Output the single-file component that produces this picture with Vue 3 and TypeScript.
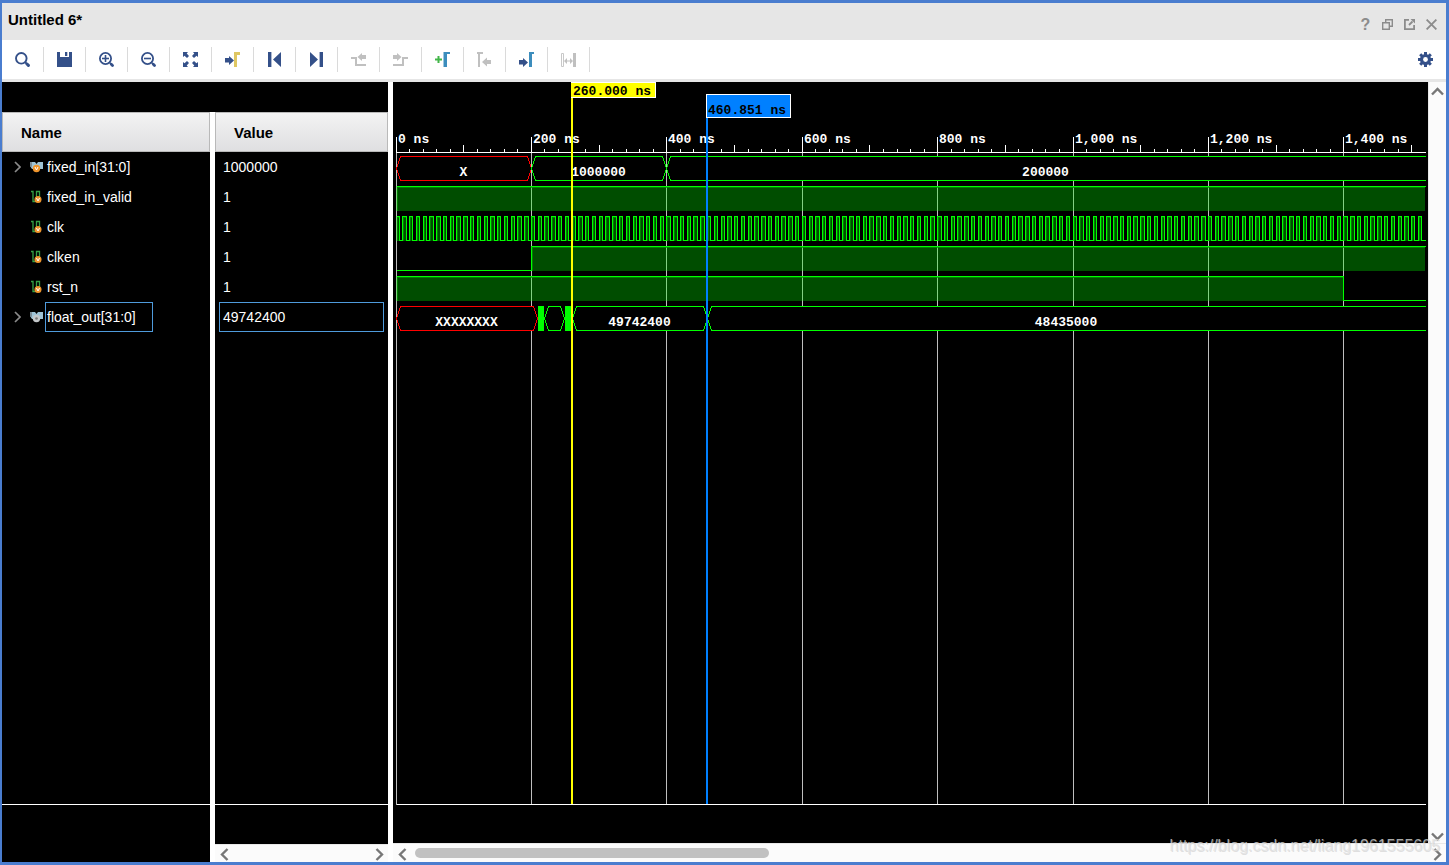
<script setup lang="ts">
import { computed, onBeforeUnmount, onMounted, ref } from 'vue'

type Kind = 'bus' | 'level'
interface Segment { from: number; to: number; label?: string; color?: string; dense?: boolean }
interface Signal {
  name: string
  value: string
  kind: Kind
  direction: 'in' | 'out'
  selected?: boolean
  segments?: Segment[]
  edges?: [number, number][]
}

const END = 100000
const RED = '#ff0000'
const GREEN = '#00ff00'

const clockEdges: [number, number][] = []
for (let t = 0; t < 4000; t += 10) clockEdges.push([t, 1], [t + 5, 0])

const signals: Signal[] = [
  {
    name: 'fixed_in[31:0]', value: '1000000', kind: 'bus', direction: 'in',
    segments: [
      { from: 0, to: 200, label: 'X', color: RED },
      { from: 200, to: 400, label: '1000000' },
      { from: 400, to: END, label: '200000' },
    ],
  },
  { name: 'fixed_in_valid', value: '1', kind: 'level', direction: 'in', edges: [[0, 1]] },
  { name: 'clk', value: '1', kind: 'level', direction: 'in', edges: clockEdges },
  { name: 'clken', value: '1', kind: 'level', direction: 'in', edges: [[0, 0], [200, 1]] },
  { name: 'rst_n', value: '1', kind: 'level', direction: 'in', edges: [[0, 1], [1400, 0]] },
  {
    name: 'float_out[31:0]', value: '49742400', kind: 'bus', direction: 'out', selected: true,
    segments: [
      { from: 0, to: 209, label: 'XXXXXXXX', color: RED },
      { from: 209, to: 219, dense: true },
      { from: 219, to: 249 },
      { from: 249, to: 260, dense: true },
      { from: 260, to: 460, label: '49742400' },
      { from: 460, to: END, label: '48435000' },
    ],
  },
]

const tools = [
  { id: 'search', label: 'Search' },
  { id: 'save', label: 'Save' },
  { id: 'zoomin', label: 'Zoom in' },
  { id: 'zoomout', label: 'Zoom out' },
  { id: 'fit', label: 'Zoom fit' },
  { id: 'cursor', label: 'Go to cursor' },
  { id: 'first', label: 'Go to start' },
  { id: 'last', label: 'Go to end' },
  { id: 'prevedge', label: 'Previous transition' },
  { id: 'nextedge', label: 'Next transition' },
  { id: 'addmark', label: 'Add marker' },
  { id: 'prevmark', label: 'Previous marker' },
  { id: 'nextmark', label: 'Next marker' },
  { id: 'measure', label: 'Swap cursors' },
]

const pane = ref<HTMLElement | null>(null)
const width = ref(1035)
const height = ref(761)
let observer: ResizeObserver | undefined
const measure = () => {
  if (!pane.value) return
  width.value = pane.value.clientWidth
  height.value = pane.value.clientHeight
}
onMounted(() => {
  measure()
  observer = new ResizeObserver(measure)
  if (pane.value) observer.observe(pane.value)
})
onBeforeUnmount(() => observer?.disconnect())

const SCALE = 0.677
const ORIGIN = 2.55
const ROW = 30
const TOP = 70
const right = computed(() => width.value - 3)
const floor = computed(() => height.value - 39)
const px = (t: number) => Math.min(Math.round(ORIGIN + t * SCALE), right.value)

const ticks = computed(() => {
  const out: { t: number; x: number }[] = []
  for (let t = 0; ORIGIN + t * SCALE < right.value - 1; t += 20) out.push({ t, x: px(t) })
  return out
})
const majors = computed(() => ticks.value.filter((k) => k.t % 200 === 0))
const minorPath = computed(() =>
  ticks.value.filter((k) => k.t % 200).map((k) => `M${k.x} 70v${k.t % 100 ? -4 : -8}`).join(''))

const levels = computed(() =>
  signals.flatMap((s, i) => {
    if (s.kind !== 'level' || !s.edges) return []
    const hi = TOP + ROW * i + 4
    const lo = hi + 24
    let line = ''
    let fill = ''
    let glow = ''
    s.edges.forEach(([t, v], n) => {
      const a = px(t)
      if (a >= right.value) return
      const next = s.edges![n + 1]
      const b = next ? px(next[0]) : right.value
      const y = v ? hi : lo
      line += n ? `V${y}H${b}` : `M${a} ${y}H${b}`
      if (v && b > a) {
        fill += `M${a} ${hi}H${b}V${lo + 1}H${a}z`
        glow += `M${a + 1} ${lo}V${hi + 1}H${b - 1}`
      }
    })
    return [{ line, fill, glow, key: s.name }]
  }))

const buses = computed(() =>
  signals.flatMap((s, i) => {
    if (s.kind !== 'bus' || !s.segments) return []
    const hi = TOP + ROW * i + 4
    const lo = hi + 24
    const mid = hi + 12
    return s.segments.map((g, n) => {
      const a = px(g.from)
      const b = px(g.to)
      const open = g.to === END
      const outline = open
        ? `M${b} ${hi}H${a + 4}L${a} ${mid}L${a + 4} ${lo}H${b}`
        : `M${a + 4} ${hi}H${b - 4}L${b} ${mid}L${b - 4} ${lo}H${a + 4}L${a} ${mid}z`
      return { key: `${s.name}${n}`, a, b, hi, outline, dense: g.dense, label: g.label, color: g.color ?? GREEN }
    })
  }))
</script>

<template>
  <main class="window">
    <header class="titlebar">
      <h1>Untitled 6*</h1>
      <div class="controls">
        <button aria-label="Help" class="help">?</button>
        <button aria-label="Restore">
          <svg width="11" height="11" viewBox="0 0 11 11" fill="none" stroke="#8c8c8c" stroke-width="1.4"><path d="M3.700 3.500V.7h6.600v6.600H7.500M.7 3.700h6.600v6.600H.7z" /></svg>
        </button>
        <button aria-label="Float">
          <svg width="11" height="11" viewBox="0 0 11 11" fill="none" stroke="#8c8c8c" stroke-width="1.800"><path d="M5 .9H.9v9.200h9.200V6M5 6l3.500-3.500" /><path d="M6.500 0H11v4.500z" fill="#8c8c8c" stroke="none" /></svg>
        </button>
        <button aria-label="Close">
          <svg width="11" height="11" viewBox="0 0 11 11" fill="none" stroke="#8c8c8c" stroke-width="1.900"><path d="M.6.6l9.800 9.800M10.400.6L.6 10.400" /></svg>
        </button>
      </div>
    </header>

    <nav class="toolbar" aria-label="Waveform tools">
      <button v-for="tool in tools" :key="tool.id" class="tool" :aria-label="tool.label">
        <svg width="15" height="15" viewBox="0 0 15 15" fill="none">
          <g v-if="tool.id === 'search'" stroke="#345089"><circle cx="6.300" cy="6.300" r="5.300" stroke-width="1.900" /><path d="M10 10l2 2" stroke-width="1.800" /><path d="M12 12l1.400 1.400" stroke-width="3" stroke-linecap="round" /></g>
          <g v-else-if="tool.id === 'save'" fill="#345089"><path d="M0 0h3v5h9V0h3v15H0z" /><path d="M8 0h2v4H8z" /><path d="M10 0h1v4h-1z" opacity=".3" /></g>
          <g v-else-if="tool.id === 'zoomin' || tool.id === 'zoomout'" stroke="#345089"><circle cx="6.500" cy="6.500" r="5.600" stroke-width="1.800" /><path d="M3 6.500h7" stroke-width="1.600" /><path v-if="tool.id === 'zoomin'" d="M6.500 3v7" stroke-width="1.600" /><path d="M12.300 12.300l1.200 1.200" stroke-width="2.800" stroke-linecap="round" /><path d="M10 10l2 2" stroke-width="1.600" /></g>
          <g v-else-if="tool.id === 'fit'"><path fill="#345089" d="M0 0h5L3.700 1.500 6 4 4 6 1.500 3.700 0 5zM15 0v5l-1.500-1.300L11 6 9 4l2.300-2.500L10 0zM0 15v-5l1.500 1.300L4 9l2 2-2.300 2.500L5 15zM15 15h-5l1.300-1.500L9 11l2-2 2.500 2.300L15 10z" /></g>
          <g v-else-if="tool.id === 'cursor'"><path fill="#345089" d="M0 6h4V4l5 4.500L4 13v-2.500H0z" /><path fill="#dfc763" d="M9 0h6v3h-3v12H9z" /></g>
          <g v-else-if="tool.id === 'first'" fill="#345089"><path d="M1 0h3v15H1zM14 0v15L6 7.500z" /><path d="M4 0h1v15H4z" opacity=".4" /></g>
          <g v-else-if="tool.id === 'last'" fill="#345089"><path d="M11 0h3v15h-3zM1 0v15l8-7.500z" /><path d="M10 0h1v15h-1z" opacity=".4" /></g>
          <g v-else-if="tool.id === 'prevedge'"><path stroke="#c0c0c0" stroke-width="2" d="M0 6h5v7h10M5 6v8" /><path fill="#c0c0c0" d="M6.500 5L11 1v2h4v4h-4v2z" /></g>
          <g v-else-if="tool.id === 'nextedge'"><path stroke="#c0c0c0" stroke-width="2" d="M0 13h10V6h5M10 6v8" /><path fill="#c0c0c0" d="M8.500 5L4 1v2H0v4h4v2z" /></g>
          <g v-else-if="tool.id === 'addmark'"><path stroke="#43b649" stroke-width="2" d="M0 7.500h7M3.500 4v7" /><path fill="#3c8dbd" d="M8.500 0H15v2h-3v13H8.500z" /></g>
          <g v-else-if="tool.id === 'prevmark'" fill="#c0c0c0"><path d="M0 0h6v2H3v13H1V2H0z" /><path d="M5 10l5-4.500V8h4v4h-4v2.500z" /></g>
          <g v-else-if="tool.id === 'nextmark'"><path fill="#345089" d="M0 8h4V6l5 4.500L4 15v-2.500H0z" /><path fill="#3c8dbd" d="M10 0h5v2h-2v13h-3z" /></g>
          <g v-else><path stroke="#c8c8c8" d="M.5 1.500h2v13h-2z" /><path fill="#c0c0c0" d="M12 1h3v14h-3zM3 9l3-3v2.500h3V6l3 3-3 3V9.500H6V12z" /></g>
        </svg>
      </button>
      <button class="settings" aria-label="Settings">
        <svg width="15" height="15" viewBox="0 0 15 15">
          <g fill="#345089"><path v-for="a in [0, 45, 90, 135]" :key="a" d="M6 0h3v15H6z" :transform="`rotate(${a} 7.5 7.5)`" /><circle cx="7.500" cy="7.500" r="5.500" /></g>
          <circle cx="7.500" cy="7.500" r="2.400" fill="#fff" />
        </svg>
      </button>
    </nav>

    <div class="panes">
      <section class="pane names">
        <table>
          <thead><tr><th scope="col">Name</th></tr></thead>
          <tbody>
            <tr v-for="s in signals" :key="s.name">
              <td>
                <div class="name-cell">
                  <button v-if="s.kind === 'bus'" class="expander" :aria-label="`Expand ${s.name}`">
                    <svg width="7" height="12" viewBox="0 0 7 12" fill="none" stroke="#8a8a8a" stroke-width="1.700"><path d="M1 1l5 5-5 5" /></svg>
                  </button>
                  <span v-else class="expander"></span>
                  <svg v-if="s.kind === 'bus'" width="15" height="14" viewBox="0 0 15 14">
                    <path fill="#9ec3d6" d="M0 2h5l1.500 2L8 2h5v7H2L0 6z" /><path fill="#7d8d96" d="M0 2h2v5L0 6z" />
                    <circle cx="6.500" cy="8.500" r="3.700" :fill="s.direction === 'in' ? '#f0952c' : '#c4c8ca'" />
                    <path v-if="s.direction === 'in'" d="M5 7l1.500 3L8 7" stroke="#fff" fill="none" />
                    <circle v-else cx="6.500" cy="8.500" r="1.300" fill="#777" />
                  </svg>
                  <svg v-else width="15" height="14" viewBox="0 0 15 14">
                    <path d="M1 1.500h2v10h2M6.500 12V1.500h3V7" fill="none" stroke="#35a045" stroke-width="1.300" />
                    <circle cx="8" cy="9.500" r="3.500" fill="#f0952c" /><path d="M6.500 8L8 11l1.500-3" stroke="#fff" fill="none" />
                  </svg>
                  <span class="label" :class="{ selected: s.selected }">{{ s.name }}</span>
                </div>
              </td>
            </tr>
          </tbody>
        </table>
        <div class="baseline"></div>
      </section>

      <div class="divider short"></div>

      <section class="pane values">
        <table>
          <thead><tr><th scope="col">Value</th></tr></thead>
          <tbody>
            <tr v-for="s in signals" :key="s.name">
              <td><div class="value-cell" :class="{ selected: s.selected }">{{ s.value }}</div></td>
            </tr>
          </tbody>
        </table>
        <div class="baseline"></div>
        <div class="hscroll">
          <button aria-label="Scroll values left"><svg width="9" height="13" viewBox="0 0 9 13"><path d="M7.500 1l-5.500 5.500 5.500 5.500" /></svg></button>
          <button aria-label="Scroll values right"><svg width="9" height="13" viewBox="0 0 9 13"><path d="M1.500 1l5.500 5.500-5.500 5.500" /></svg></button>
        </div>
      </section>

      <div class="divider"></div>

      <section class="wave">
        <div ref="pane" class="plot">
          <svg class="canvas" :width="width" :height="height">
            <g class="crisp" transform="translate(.5 .5)" fill="none">
              <path v-for="k in majors" :key="k.t" :d="`M${k.x} 70V${floor}`" stroke="#bebebe" />
              <path v-for="k in majors" :key="`m${k.t}`" :d="`M${k.x} 54V70`" stroke="#fff" />
              <path :d="minorPath" stroke="#fff" />
              <path :d="`M3 70H${right}M3 ${floor}H${right}`" stroke="#fff" />
            </g>
            <g class="crisp">
              <template v-for="l in levels" :key="l.key">
                <path :d="l.fill" fill="#00ff00" fill-opacity=".3" />
                <g transform="translate(.5 .5)" fill="none">
                  <path :d="l.glow" stroke="#009600" stroke-opacity=".7" />
                  <path :d="l.line" stroke="#00ff00" />
                </g>
              </template>
            </g>
            <template v-for="b in buses" :key="b.key">
              <rect v-if="b.dense" :x="b.a + 1" :y="b.hi" :width="b.b - b.a - 1" height="25" fill="#00ff00" />
              <path v-else class="crisp" transform="translate(.5 .5)" :d="b.outline" :stroke="b.color" fill="#000" />
              <text v-if="b.label" :x="(b.a + b.b) / 2" :y="b.hi + 20" text-anchor="middle" fill="#fff">{{ b.label }}</text>
            </template>
            <text v-for="k in majors" :key="`t${k.t}`" :x="k.x + 2" y="61" fill="#fff">{{ k.t.toLocaleString('en-US') }} ns</text>

            <g class="crisp">
              <rect :x="px(260) - 1" y="0" width="2" :height="floor" fill="#ffff00" />
              <rect :x="px(460) - 1" y="12" width="2" :height="floor - 12" fill="#0080ff" />
              <rect :x="px(260) - 1" y="0" width="85" height="16" fill="#fff" />
              <rect :x="px(260) - 1" y="1" width="84" height="14" fill="#ffff00" />
              <rect :x="px(460) - 1" y="12" width="85" height="24" fill="#fff" />
              <rect :x="px(460)" y="13" width="83" height="22" fill="#0080ff" />
            </g>
            <text :x="px(260) + 1" y="13" fill="#000">260.000 ns</text>
            <text :x="px(460) + 1" y="32" fill="#000">460.851 ns</text>
          </svg>
        </div>
        <div class="vscroll">
          <button aria-label="Scroll up"><svg width="13" height="9" viewBox="0 0 13 9"><path d="M1 7.500l5.500-5.500 5.500 5.500" /></svg></button>
          <button aria-label="Scroll down"><svg width="13" height="9" viewBox="0 0 13 9"><path d="M1 1.500l5.500 5.500 5.500-5.500" /></svg></button>
        </div>
        <div class="hscroll wide">
          <button aria-label="Scroll left"><svg width="9" height="13" viewBox="0 0 9 13"><path d="M7.500 1l-5.500 5.500 5.500 5.500" /></svg></button>
          <div class="track"><div class="thumb"></div></div>
          <button aria-label="Scroll right"><svg width="9" height="13" viewBox="0 0 9 13"><path d="M1.500 1l5.500 5.500-5.500 5.500" /></svg></button>
        </div>
        <span class="watermark">https://blog.csdn.net/liang1961555605</span>
      </section>
    </div>
  </main>
</template>

<style>
body { background: #4a7dcf; }
</style>

<style scoped>
.window {
  display: flex;
  flex-direction: column;
  box-sizing: border-box;
  height: 100vh;
  border: 3px solid #4a7dcf;
  border-left-width: 2px;
  background: #fff;
  color: #000;
  font: 14px "Liberation Sans", Arial, sans-serif;
}
button { padding: 0; border: 0; background: none; }
svg { display: block; }

.titlebar {
  display: flex;
  justify-content: space-between;
  height: 37px;
  padding: 0 9px 0 6px;
  background: #e6e6e6;
}
h1 { margin: 0; font-size: 15px; font-weight: bold; line-height: 34px; }
.controls { display: flex; align-items: center; gap: 11px; height: 43px; }
.controls button { width: 11px; height: 11px; }
.controls .help { color: #8c8c8c; font: bold 16px/11px "Liberation Sans", Arial, sans-serif; }

.toolbar {
  display: flex;
  align-items: center;
  height: 39px;
  border-bottom: 3px solid #e6e6e6;
}
.tool {
  display: grid;
  place-items: center;
  box-sizing: border-box;
  width: 42px;
  height: 25px;
  border-right: 1px solid #dadada;
}
.settings { margin: 0 13px 0 auto; }

.panes {
  display: grid;
  flex: 1;
  min-height: 0;
  grid-template-columns: 208px 5px 173px 5px minmax(0, 1fr);
  background: #000;
}
.divider { background: #fff; }
.divider.short { margin-top: 30px; }
.pane { display: flex; flex-direction: column; min-width: 0; padding-top: 30px; color: #fff; }
table { width: 100%; border-collapse: separate; border-spacing: 0; table-layout: fixed; }
th {
  box-sizing: border-box;
  height: 40px;
  padding: 0 18px;
  border: 1px solid #b9b9b9;
  background: linear-gradient(#f3f3f3, #dfdfe1);
  color: #000;
  font-size: 15px;
  text-align: left;
}
td { height: 30px; padding: 0; }
.name-cell { display: flex; align-items: center; height: 30px; padding-left: 12px; }
.expander { flex: none; width: 7px; height: 12px; margin-right: 9px; }
.name-cell .label { box-sizing: border-box; height: 30px; padding: 0 2px; line-height: 30px; }
.name-cell .label.selected { padding: 0 16px 0 1px; border: 1px solid #4f9bdc; line-height: 28px; }
.value-cell { box-sizing: border-box; height: 30px; padding: 0 8px; line-height: 30px; }
.value-cell.selected { margin: 0 4px; padding: 0 3px; border: 1px solid #4f9bdc; line-height: 28px; }
.baseline { flex: 1; border-bottom: 1px solid #fff; }
.names .baseline { margin-bottom: 57px; }
.values .baseline { margin-bottom: 39px; }

.hscroll {
  display: flex;
  justify-content: space-between;
  align-items: center;
  box-sizing: border-box;
  height: 18px;
  padding: 1px 4px 0 5px;
  border-top: 1px solid #e8e8e8;
  background: #fbfbfb;
}
.hscroll path, .vscroll path { fill: none; stroke: #777; stroke-width: 2.4; }

.wave {
  position: relative;
  display: grid;
  grid-template: minmax(0, 1fr) 19px / minmax(0, 1fr) 18px;
}
.plot { min-width: 0; min-height: 0; overflow: hidden; }
.canvas { font: bold 13px "Liberation Mono", "Courier New", monospace; }
.crisp { shape-rendering: crispEdges; }
.vscroll {
  display: flex;
  flex-direction: column;
  justify-content: space-between;
  align-items: center;
  padding: 5px 0 2px;
  border-left: 1px solid #e8e8e8;
  background: #fbfbfb;
}
.hscroll.wide { grid-column: 1 / 3; height: 19px; gap: 8px; padding: 2px 4px 0 5px; }
.track { flex: 1; padding-bottom: 2px; }
.thumb { width: 35%; height: 10px; border-radius: 5px; background: #c1c1c1; }
.watermark {
  position: absolute;
  right: 6px;
  bottom: 7px;
  color: rgba(225, 225, 225, 0.75);
  font-size: 16px;
  line-height: 18px;
  text-shadow: 1px 1px 0 rgba(170, 170, 170, 0.35);
  pointer-events: none;
}
</style>
